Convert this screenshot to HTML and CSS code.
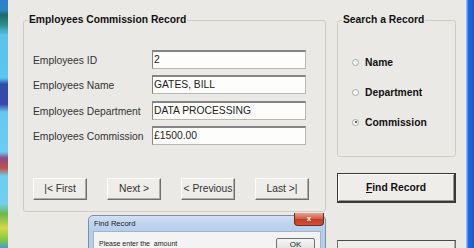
FILE: index.html
```html
<!DOCTYPE html>
<html>
<head>
<meta charset="utf-8">
<link rel="stylesheet" href="styles.css">
</head>
<body>
<div class="screen">
  <div class="desk"></div>
  <div class="client">
    <fieldset class="group main">
      <legend>Employees Commission Record</legend>
      <div class="fields">
        <span class="lbl">Employees ID</span><div class="tb">2</div>
        <span class="lbl">Employees Name</span><div class="tb">GATES, BILL</div>
        <span class="lbl">Employees Department</span><div class="tb">DATA PROCESSING</div>
        <span class="lbl">Employees Commission</span><div class="tb">£1500.00</div>
      </div>
      <div class="navs">
        <button class="btn">|&lt; First</button>
        <button class="btn">Next &gt;</button>
        <button class="btn">&lt; Previous</button>
        <button class="btn">Last &gt;|</button>
      </div>
    </fieldset>
    <div class="side">
      <fieldset class="group search">
        <legend>Search a Record</legend>
        <div class="radios">
          <div class="radio"><span class="dot"></span>Name</div>
          <div class="radio"><span class="dot"></span>Department</div>
          <div class="radio"><span class="dot on"></span>Commission</div>
        </div>
      </fieldset>
      <button class="btn find"><u>F</u>ind Record</button>
      <button class="btn extra"></button>
    </div>
  </div>
  <div class="frame"></div>
  <div class="dialog">
    <div class="dtitle">Find Record</div>
    <div class="dclose">x</div>
    <div class="dbody">
      <span class="prompt">Please enter the  amount</span>
      <button class="ok">OK</button>
    </div>
  </div>
</div>
</body>
</html>
```

FILE: styles.css
```css
* { box-sizing: border-box; }
html, body { margin: 0; padding: 0; }
body { width: 474px; height: 248px; overflow: hidden; font-family: "Liberation Sans", Arial, sans-serif; }

.screen {
  position: relative;
  width: 474px;
  height: 248px;
  display: flex;
  overflow: hidden;
}

.desk {
  width: 8px;
  flex: none;
  background: linear-gradient(to bottom,
    #2d7fd0 0, #2a85c8 10px, #1d6a6a 15px, #2b8f8f 25px, #59c3ea 35px,
    #5bc6ee 78px, #2a4fa8 84px, #3a46b0 104px, #66c8f0 112px,
    #6ccdf2 152px, #8b4a8a 158px, #c0504a 168px, #6ccdf2 176px,
    #70d0f0 204px, #6ab84a 214px, #d8d84a 228px, #7acb40 240px, #4a9bd0 248px);
}

.client {
  width: 458px;
  flex: none;
  background: #ebe9e5;
  padding: 14px 0 0 15px;
  display: flex;
  align-items: flex-start;
}

.frame {
  flex: 1;
  background: linear-gradient(to right, #8fbbf0 0, #8fbbf0 1px, #2a66d6 2px, #1e57c8 8px);
}

.group {
  margin: 0;
  min-width: 0;
  border: 1px solid #cfccc3;
  border-radius: 3px;
  padding: 0;
}

.group legend {
  font-weight: bold;
  font-size: 10.3px;
  line-height: 12px;
  color: #111;
  padding: 0 1px;
  margin-left: 4px;
}

.main {
  width: 303px;
  height: 198px;
}

.fields {
  margin: 24px 0 0 9px;
  display: grid;
  grid-template-columns: 119px 154px;
  grid-auto-rows: 19px;
  row-gap: 6.3px;
  align-items: center;
}

.lbl {
  font-size: 10.3px;
  color: #333;
  padding-top: 2px;
}

.tb {
  height: 19px;
  background: #fdfdfc;
  border: 1px solid #b9b7b1;
  border-top: 2px solid #858585;
  border-left-color: #858585;
  font-size: 10.3px;
  color: #222;
  padding: 1px 0 0 1px;
  line-height: 13px;
}

.navs {
  margin: 33px 0 0 9px;
  display: flex;
  gap: 20px;
}

.btn {
  font-family: "Liberation Sans", Arial, sans-serif;
  font-size: 10.3px;
  color: #333;
  background: #efede9;
  border: 1px solid;
  border-color: #fbfbfa #6f6f6f #6f6f6f #fbfbfa;
  box-shadow: inset -1px -1px #aeaba4;
  padding: 0;
  margin: 0;
}

.navs .btn {
  width: 54px;
  height: 22px;
}

.side {
  margin-left: 11px;
  width: 119px;
  display: flex;
  flex-direction: column;
}

.search {
  width: 119px;
  height: 143px;
}

.radios {
  margin-top: 21px;
  padding-left: 14px;
  display: flex;
  flex-direction: column;
}

.radio {
  height: 30px;
  display: flex;
  align-items: center;
  gap: 6px;
  font-weight: bold;
  font-size: 10.3px;
  color: #111;
}

.dot {
  width: 7px;
  height: 7px;
  border-radius: 50%;
  border: 1px solid #a9a9a9;
  background: #f7f7f5;
  position: relative;
  flex: none;
}

.dot.on::after {
  content: "";
  position: absolute;
  left: 1.5px;
  top: 1.5px;
  width: 2px;
  height: 2px;
  border-radius: 50%;
  background: #333;
}

.find {
  margin-top: 16px;
  width: 119px;
  height: 30px;
  font-weight: bold;
  color: #111;
  border: 1px solid #3a3a3a;
  border-right-width: 2px;
  border-bottom-width: 2px;
  box-shadow: inset 1px 1px #ffffff, inset -1px -1px #9a978f;
}

.extra {
  margin-top: 37px;
  width: 119px;
  height: 30px;
  border-color: #4a4a4a #6f6f6f #6f6f6f #6f6f6f;
}

.dialog {
  position: absolute;
  left: 88px;
  top: 215px;
  width: 238px;
  height: 45px;
  background: linear-gradient(to bottom, #d2e0f2 0, #bfd3ed 8px, #b6cdea 16px);
  border: 1px solid #7d8ea5;
  border-radius: 5px 5px 0 0;
  padding: 0 4px 0 4px;
  font-family: "Liberation Sans", Arial, sans-serif;
}

.dtitle {
  font-size: 7.6px;
  line-height: 14px;
  color: #1d1d1d;
  padding: 1px 0 0 1px;
  height: 15px;
}

.dclose {
  position: absolute;
  left: 205px;
  top: -3px;
  width: 30px;
  height: 13px;
  border: 1px solid #6e2a1c;
  border-top: none;
  border-radius: 0 0 4px 4px;
  background: linear-gradient(to bottom, #e7a08f 0, #d5614a 45%, #c23b22 55%, #d0533a 100%);
  color: #fff;
  font-size: 8px;
  font-weight: bold;
  line-height: 11px;
  text-align: center;
}

.dbody {
  height: 30px;
  background: #f3f3f3;
  border: 1px solid #a3b3c8;
  display: flex;
  align-items: flex-start;
  justify-content: space-between;
  padding: 7px 5px 0 5px;
}

.prompt {
  font-size: 7px;
  color: #1a1a1a;
  white-space: pre;
  line-height: 9px;
}

.ok {
  width: 39px;
  height: 18px;
  margin-top: -1px;
  background: linear-gradient(to bottom, #f5f5f5 0, #e6e6e6 50%, #dcdcdc 100%);
  border: 1px solid #707070;
  border-radius: 2px;
  font-family: "Liberation Sans", Arial, sans-serif;
  font-size: 8px;
  line-height: 9px;
  color: #222;
  padding: 0 0 5px 0;
}
```
